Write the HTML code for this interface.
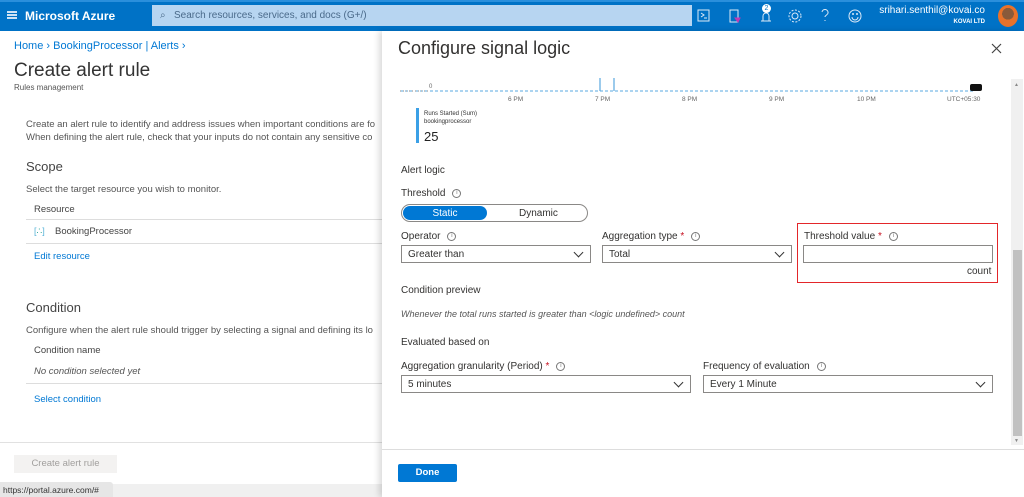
<!DOCTYPE html>
<html><head><meta charset="utf-8">
<style>
*{box-sizing:border-box;margin:0;padding:0}
body{width:1024px;height:497px;overflow:hidden;font-family:"Liberation Sans",sans-serif;background:#fff;position:relative;color:#323130}
.a{position:absolute;white-space:nowrap}
.info{display:inline-block;width:9px;height:9px;border:1px solid #777;border-radius:50%;font-size:6px;text-align:center;line-height:7px;color:#777;vertical-align:middle;margin-left:7px}
.sel{position:absolute;border:1px solid #8a8886;height:18px;font-size:10px;padding-left:6px;line-height:17px;color:#323130;background:#fff}
.chev{position:absolute;right:8px;top:3px;width:7px;height:7px;border-right:1px solid #333;border-bottom:1px solid #333;transform:rotate(45deg)}
.req{color:#c50f1f}
.lbl{font-size:10px;color:#323130}
.L{color:#555}
.blue{color:#0078d4}
</style></head><body>
<div class="a" style="left:0;top:0;width:1024px;height:31px;background:#0072c6;border-top:2px solid #2a8fdc"></div>
<div class="a" style="left:7px;top:11px;width:10px;height:1.5px;background:#cfe3f5;box-shadow:0 3px 0 #cfe3f5,0 6px 0 #cfe3f5"></div>
<div class="a" style="left:25px;top:9px;color:#fff;font-size:12px;font-weight:bold">Microsoft Azure</div>
<div class="a" style="left:152px;top:5px;width:540px;height:21px;background:#b7d5f1"></div>
<div class="a" style="left:160px;top:10px;font-size:10px;color:#4a6a8a">&#x2315;</div>
<div class="a" style="left:174px;top:10px;font-size:10px;color:#4a6a8a">Search resources, services, and docs (G+/)</div>
<svg class="a" style="left:695px;top:6px" width="180" height="20" viewBox="0 0 180 20" fill="none" stroke="#dbe9f7" stroke-width="1">
 <rect x="3" y="4" width="11" height="11"/><path d="M6 7l3 2-3 2M9 12h3"/>
 <rect x="35" y="4" width="8" height="12"/><path d="M40 12h5l-2 4z" fill="#c239b3" stroke="#c239b3"/>
 <path d="M66 15h10M68 15v-5a3 3 0 016 0v5"/>
 <circle cx="100" cy="10" r="3"/><circle cx="100" cy="10" r="6" stroke-dasharray="2 1.5"/>
 <path d="M127 6a3 3 0 116 1c0 2-3 2-3 4M130 14v1"/>
 <circle cx="160" cy="10" r="6"/><path d="M157 11a3 3 0 006 0"/><circle cx="158" cy="8" r=".5"/><circle cx="162" cy="8" r=".5"/>
</svg>
<div class="a" style="left:762px;top:4px;width:9px;height:9px;background:#fff;border-radius:50%;font-size:7px;color:#0072c6;text-align:center;line-height:9px">2</div>
<div class="a" style="right:39px;top:5px;color:#fff;font-size:10px">srihari.senthil@kovai.co</div>
<div class="a" style="right:39px;top:19px;color:#fff;font-size:6px;font-weight:bold">KOVAI LTD</div>
<div class="a" style="left:998px;top:5px;width:20px;height:22px;border-radius:50%;background:radial-gradient(circle at 50% 40%,#8a5a3a 0 35%,#e8722a 36%)"></div>

<div class="a blue" style="left:14px;top:40px;font-size:11px">Home &#x203A; BookingProcessor | Alerts &#x203A;</div>
<div class="a" style="left:14px;top:60px;font-size:19px;color:#333">Create alert rule</div>
<div class="a L" style="left:14px;top:83px;font-size:8px">Rules management</div>
<div class="a L" style="left:26px;top:119px;font-size:9.5px">Create an alert rule to identify and address issues when important conditions are fo</div>
<div class="a L" style="left:26px;top:132px;font-size:9.5px">When defining the alert rule, check that your inputs do not contain any sensitive co</div>
<div class="a" style="left:26px;top:159px;font-size:13px;color:#444">Scope</div>
<div class="a L" style="left:26px;top:184px;font-size:9.5px">Select the target resource you wish to monitor.</div>
<div class="a" style="left:34px;top:204px;font-size:9.5px;color:#444">Resource</div>
<div class="a" style="left:26px;top:219px;width:356px;height:1px;background:#ddd"></div>
<div class="a" style="left:34px;top:226px;font-size:9px;color:#3a9"><span style="color:#59b4d9">[</span>&#x2234;<span style="color:#59b4d9">]</span></div>
<div class="a" style="left:55px;top:226px;font-size:9.5px;color:#444">BookingProcessor</div>
<div class="a" style="left:26px;top:243px;width:356px;height:1px;background:#ddd"></div>
<div class="a blue" style="left:34px;top:251px;font-size:9.5px">Edit resource</div>
<div class="a" style="left:26px;top:300px;font-size:13px;color:#444">Condition</div>
<div class="a L" style="left:26px;top:325px;font-size:9.5px">Configure when the alert rule should trigger by selecting a signal and defining its lo</div>
<div class="a" style="left:34px;top:345px;font-size:9.5px;color:#444">Condition name</div>
<div class="a L" style="left:34px;top:366px;font-size:9.5px;font-style:italic">No condition selected yet</div>
<div class="a" style="left:26px;top:383px;width:356px;height:1px;background:#ddd"></div>
<div class="a blue" style="left:34px;top:394px;font-size:9.5px">Select condition</div>
<div class="a" style="left:0;top:442px;width:382px;height:1px;background:#e1e1e1"></div>
<div class="a" style="left:14px;top:455px;width:103px;height:18px;background:#f3f2f1;color:#a19f9d;font-size:9.5px;text-align:center;line-height:18px">Create alert rule</div>
<div class="a" style="left:0;top:484px;width:382px;height:13px;background:#f0f0f0"></div>
<div class="a" style="left:0;top:482px;width:113px;height:15px;background:#e6e6e6;border-radius:0 3px 0 0;font-size:8.5px;color:#333;padding:3px 0 0 3px">https://portal.azure.com/#</div>

<div class="a" style="left:382px;top:31px;width:642px;height:466px;background:#fff;box-shadow:-3px 0 6px rgba(0,0,0,.15)"></div>
<div class="a" style="left:398px;top:38px;font-size:18px;color:#323130">Configure signal logic</div>
<svg class="a" style="left:991px;top:43px" width="11" height="11"><path d="M1 1l9 9M10 1l-9 9" stroke="#444" stroke-width="1.2"/></svg>
<svg class="a" style="left:398px;top:74px" width="590" height="32">
 <path d="M2 17H575" stroke="#59a8e0" stroke-width="1" stroke-dasharray="3 2"/>
 <path d="M2 17H30" stroke="#888" stroke-dasharray="1 2"/>
 <path d="M202 17V4M216 17V4" stroke="#59a8e0" stroke-width="1.2"/>
 <rect x="572" y="10" width="12" height="7" rx="2" fill="#111"/>
 <text x="31" y="14" font-size="6" fill="#666" font-family="Liberation Sans">0</text>
</svg>
<div class="a" style="left:508px;top:96px;font-size:6.5px;color:#666">6 PM</div>
<div class="a" style="left:595px;top:96px;font-size:6.5px;color:#666">7 PM</div>
<div class="a" style="left:682px;top:96px;font-size:6.5px;color:#666">8 PM</div>
<div class="a" style="left:769px;top:96px;font-size:6.5px;color:#666">9 PM</div>
<div class="a" style="left:857px;top:96px;font-size:6.5px;color:#666">10 PM</div>
<div class="a" style="left:947px;top:96px;font-size:6.5px;color:#666">UTC+05:30</div>
<div class="a" style="left:416px;top:108px;width:3px;height:35px;background:#3ba0e6"></div>
<div class="a" style="left:424px;top:111px;font-size:6px;color:#333">Runs Started (Sum)</div>
<div class="a" style="left:424px;top:119px;font-size:6px;color:#333">bookingprocessor</div>
<div class="a" style="left:424px;top:129px;font-size:13px;color:#222">25</div>

<div class="a lbl" style="left:401px;top:165px">Alert logic</div>
<div class="a lbl" style="left:401px;top:188px">Threshold<span class="info">i</span></div>
<div class="a" style="left:401px;top:204px;width:187px;height:18px;border:1px solid #8a8886;border-radius:9px"></div>
<div class="a" style="left:403px;top:206px;width:84px;height:14px;background:#0078d4;border-radius:7px;color:#fff;font-size:10px;text-align:center;line-height:15px">Static</div>
<div class="a" style="left:519px;top:208px;font-size:10px;color:#323130">Dynamic</div>

<div class="a lbl" style="left:401px;top:231px">Operator<span class="info">i</span></div>
<div class="sel" style="left:401px;top:245px;width:190px">Greater than<div class="chev"></div></div>
<div class="a lbl" style="left:602px;top:231px">Aggregation type <span class="req">*</span><span class="info">i</span></div>
<div class="sel" style="left:602px;top:245px;width:190px">Total<div class="chev"></div></div>
<div class="a" style="left:797px;top:223px;width:201px;height:60px;border:1.5px solid #e3262a"></div>
<div class="a lbl" style="left:804px;top:231px">Threshold value <span class="req">*</span><span class="info">i</span></div>
<div class="sel" style="left:803px;top:245px;width:190px"></div>
<div class="a lbl" style="left:967px;top:266px">count</div>

<div class="a lbl" style="left:401px;top:285px">Condition preview</div>
<div class="a" style="left:401px;top:309px;font-size:9px;font-style:italic;color:#555">Whenever the total runs started is greater than &lt;logic undefined&gt; count</div>
<div class="a lbl" style="left:401px;top:337px">Evaluated based on</div>
<div class="a lbl" style="left:401px;top:361px">Aggregation granularity (Period) <span class="req">*</span><span class="info">i</span></div>
<div class="sel" style="left:401px;top:375px;width:290px">5 minutes<div class="chev"></div></div>
<div class="a lbl" style="left:703px;top:361px">Frequency of evaluation<span class="info">i</span></div>
<div class="sel" style="left:703px;top:375px;width:290px">Every 1 Minute<div class="chev"></div></div>

<div class="a" style="left:1011px;top:79px;width:12px;height:366px;background:#f0f0f0"></div>
<div class="a" style="left:1013px;top:250px;width:9px;height:186px;background:#c1c1c1"></div>
<div class="a" style="left:1014px;top:82px;font-size:5px;color:#888">&#x25B2;</div>
<div class="a" style="left:1014px;top:438px;font-size:5px;color:#888">&#x25BC;</div>
<div class="a" style="left:382px;top:449px;width:642px;height:1px;background:#ddd"></div>
<div class="a" style="left:398px;top:464px;width:59px;height:18px;background:#0078d4;border-radius:2px;color:#fff;font-size:9.5px;font-weight:bold;text-align:center;line-height:18px">Done</div>
</body></html>
